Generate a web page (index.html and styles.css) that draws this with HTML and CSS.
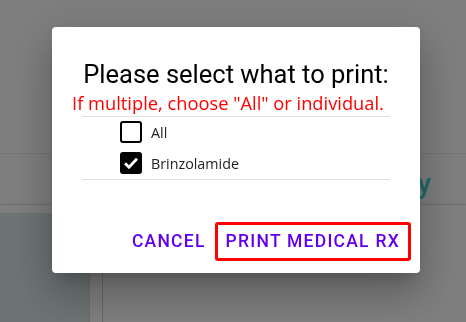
FILE: index.html
```html
<!DOCTYPE html>
<html lang="en">
<head>
    <meta charset="UTF-8">
    <meta name="viewport" content="width=device-width, initial-scale=1.0">
    <title>Print Medical Rx</title>
    <link rel="stylesheet" href="styles.css">
</head>
<body>
    <div class="page">
        <div class="page-top"></div>
        <div class="page-title">Pharmacy</div>
        <div class="page-body">
            <div class="side"></div>
            <div class="rail"></div>
            <div class="main"></div>
        </div>
    </div>

    <div class="backdrop">
        <div class="dialog">
            <h2 class="dialog-title">Please select what to print:</h2>
            <p class="dialog-note">If multiple, choose "All" or individual.</p>
            <ul class="print-list">
                <li class="print-item">
                    <span class="check"></span>
                    <span class="print-label">All</span>
                </li>
                <li class="print-item">
                    <span class="check checked">
                        <svg width="18" height="18" viewBox="0 0 18 18"><path d="M3 9.3 L7 13.2 L15 4.8" fill="none" stroke="#fff" stroke-width="2.8"/></svg>
                    </span>
                    <span class="print-label">Brinzolamide</span>
                </li>
            </ul>
            <div class="dialog-actions">
                <button class="btn btn-cancel">Cancel</button>
                <button class="btn btn-outlined">Print Medical Rx</button>
            </div>
        </div>
    </div>
</body>
</html>
```

FILE: styles.css
```css
* {
    margin: 0;
    padding: 0;
    box-sizing: border-box;
}

body {
    background: #7f7f7f;
    font-family: Roboto, sans-serif;
    overflow: hidden;
}

.page {
    display: flex;
    flex-direction: column;
    height: 100vh;
}

.page-top {
    height: 154px;
    border-bottom: 1px solid #767676;
}

.page-title {
    height: 51px;
    padding: 12px 35px 0 0;
    text-align: right;
    font-size: 28px;
    font-weight: 500;
    line-height: 36px;
    color: #1f6b6b;
    border-bottom: 1px solid #6f6f6f;
}

.page-body {
    display: flex;
    flex: 1;
    padding-top: 8px;
}

.side {
    width: 90px;
    background: #6d7474;
    border-right: 1px solid #6a6a6a;
}

.rail {
    width: 13px;
    border-right: 1px solid #686868;
}

.main {
    flex: 1;
}

.backdrop {
    position: fixed;
    inset: 0;
    padding: 27px 0 0 52px;
}

.dialog {
    width: 368px;
    background: white;
    border-radius: 4px;
    padding: 33px 30px 12px;
    box-shadow: 0 11px 15px -7px rgba(0,0,0,0.2), 0 24px 38px 3px rgba(0,0,0,0.14), 0 9px 46px 8px rgba(0,0,0,0.12);
}

.dialog-title {
    margin: 0 -10px;
    font-size: 25.5px;
    font-weight: 400;
    line-height: 28px;
    text-align: center;
    color: #000;
}

.dialog-note {
    margin: 4px -24px 2px;
    padding-right: 16px;
    font-family: "Open Sans", sans-serif;
    font-size: 18.3px;
    line-height: 22px;
    text-align: center;
    color: #ff0000;
}

.print-list {
    list-style: none;
    border-top: 1px solid #e0e0e0;
    border-bottom: 1px solid #e0e0e0;
}

.print-item {
    display: flex;
    align-items: center;
    gap: 9px;
    height: 31px;
    padding: 4px 0 5px 38px;
}

.check {
    display: flex;
    align-items: center;
    justify-content: center;
    width: 22px;
    height: 22px;
    border: 2px solid #000;
    border-radius: 3px;
}

.check.checked {
    background: #000;
}

.print-label {
    font-family: "Open Sans", sans-serif;
    font-size: 14.3px;
    color: #222;
}

.dialog-actions {
    display: flex;
    justify-content: flex-end;
    margin: 42px -21px 0 -30px;
}

.btn {
    height: 39px;
    padding: 0 8px;
    border: 3px solid transparent;
    border-radius: 3px;
    background: none;
    font-family: Roboto, sans-serif;
    font-size: 17.5px;
    font-weight: 500;
    letter-spacing: 1.25px;
    line-height: 33px;
    text-transform: uppercase;
    color: #6200ee;
}

.btn-cancel {
    margin-right: -2px;
}

.btn-outlined {
    border-color: #ff0000;
}
```
